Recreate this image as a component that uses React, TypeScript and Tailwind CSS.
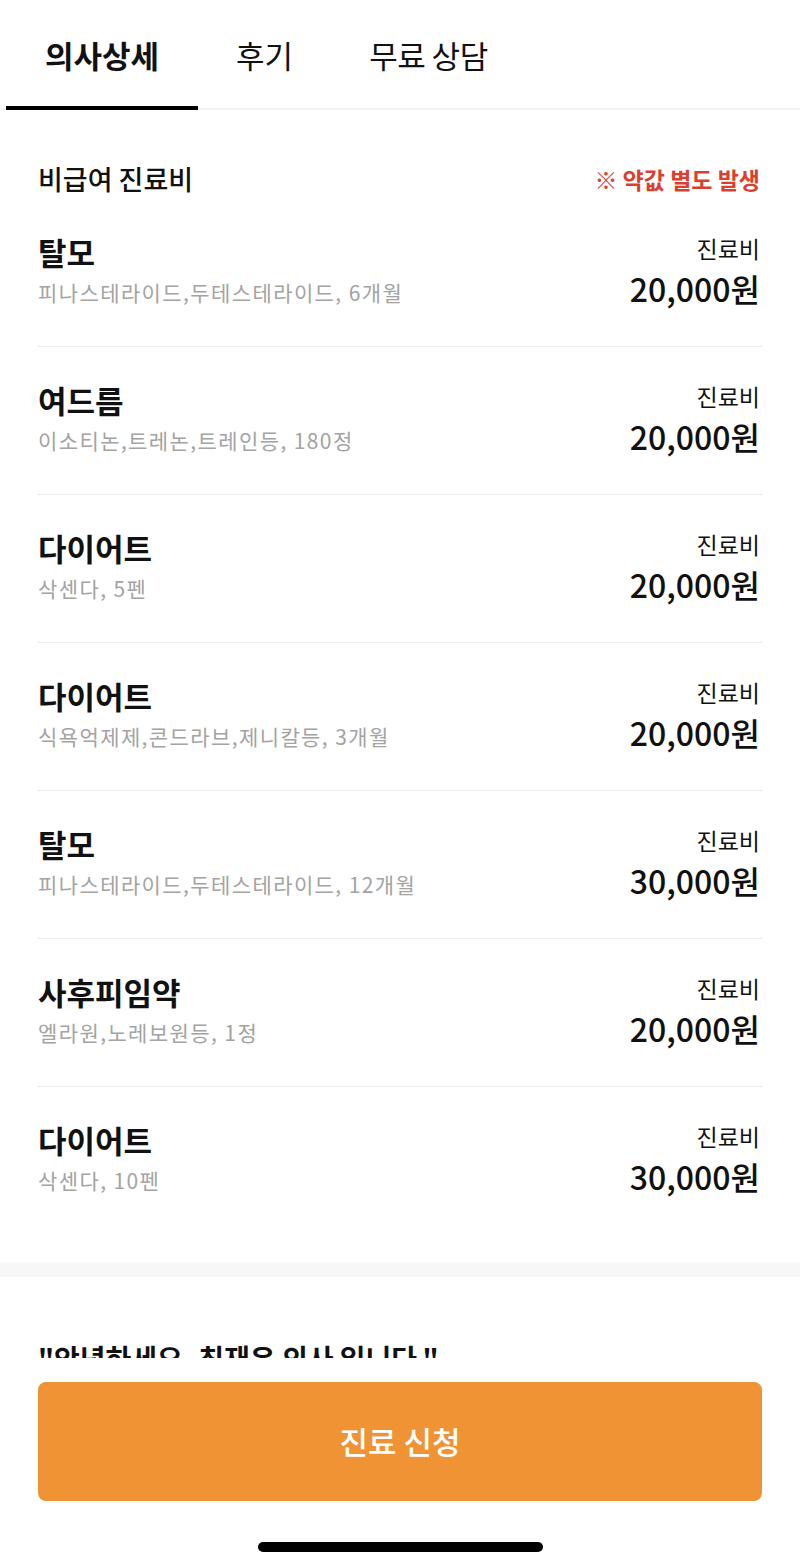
import React from "react";

const items = [
  { title: "탈모", sub: "피나스테라이드,두테스테라이드, 6개월", price: "20,000원" },
  { title: "여드름", sub: "이소티논,트레논,트레인등, 180정", price: "20,000원" },
  { title: "다이어트", sub: "삭센다, 5펜", price: "20,000원" },
  { title: "다이어트", sub: "식욕억제제,콘드라브,제니칼등, 3개월", price: "20,000원" },
  { title: "탈모", sub: "피나스테라이드,두테스테라이드, 12개월", price: "30,000원" },
  { title: "사후피임약", sub: "엘라원,노레보원등, 1정", price: "20,000원" },
  { title: "다이어트", sub: "삭센다, 10펜", price: "30,000원" },
];

const font = { fontFamily: '"Noto Sans CJK KR", "Noto Sans", sans-serif' };

export default function App() {
  return (
    <div
      className="w-[800px] h-[1567px] bg-white flex flex-col overflow-hidden text-[#111]"
      style={font}
    >
      <div className="flex-1 overflow-hidden">
        {/* Tabs */}
        <div className="flex h-[110px] border-b-2 border-[#f1f1f1] pl-[6px]">
          <div className="relative flex items-center px-[39px] pt-[2px]">
            <span className="text-[31px] font-semibold">의사상세</span>
            <div className="absolute left-0 right-0 bottom-[-2px] h-[4px] bg-black" />
          </div>
          <div className="flex items-center pl-[38px] pr-[36px] pt-[2px]">
            <span className="text-[31px] font-normal">후기</span>
          </div>
          <div className="flex items-center px-[40px] pt-[2px]">
            <span className="text-[31px] font-normal tracking-[-0.5px]">무료 상담</span>
          </div>
        </div>

        {/* Section */}
        <div className="px-[38px]">
          <div className="flex items-center justify-between h-[32px] mt-[53px]">
            <span className="text-[27px] font-medium">비급여 진료비</span>
            <span className="text-[23px] font-bold text-[#d9402f] pr-[2px]">
              ※ 약값 별도 발생
            </span>
          </div>
          <div className="mt-[4px]">
            {items.map((it, i) => (
              <div
                key={i}
                className={
                  i < items.length - 1
                    ? "flex justify-between pt-[35px] pb-[38px] border-b border-[#ececec]"
                    : "flex justify-between pt-[35px] pb-[66px]"
                }
              >
                <div className="flex flex-col">
                  <span className="text-[31px] leading-[36px] font-bold">
                    {it.title}
                  </span>
                  <span className="text-[21px] leading-[28px] mt-[8px] text-[#a3a3a3] tracking-[1.4px]">
                    {it.sub}
                  </span>
                </div>
                <div className="flex flex-col items-end pr-[2px]">
                  <span className="text-[23px] leading-[28px]">진료비</span>
                  <span className="text-[32px] leading-[40px] mt-[6px] font-medium">
                    {it.price}
                  </span>
                </div>
              </div>
            ))}
          </div>
        </div>

        <div className="h-[15px] bg-[#f7f7f7]" />
        <div className="px-[38px] pt-[63px] whitespace-nowrap">
          <span className="text-[28px] leading-[36px] font-bold">
            "안녕하세요, 최재은 의사 입니다."
          </span>
        </div>
      </div>

      {/* Bottom bar */}
      <div className="h-[209px] shrink-0 bg-white flex flex-col items-center pt-[24px]">
        <button className="w-[724px] h-[119px] rounded-[8px] bg-[#ef9334] text-white text-[31px] font-medium">
          진료 신청
        </button>
        <div className="mt-[41px] w-[285px] h-[10px] rounded-full bg-black" />
      </div>
    </div>
  );
}
